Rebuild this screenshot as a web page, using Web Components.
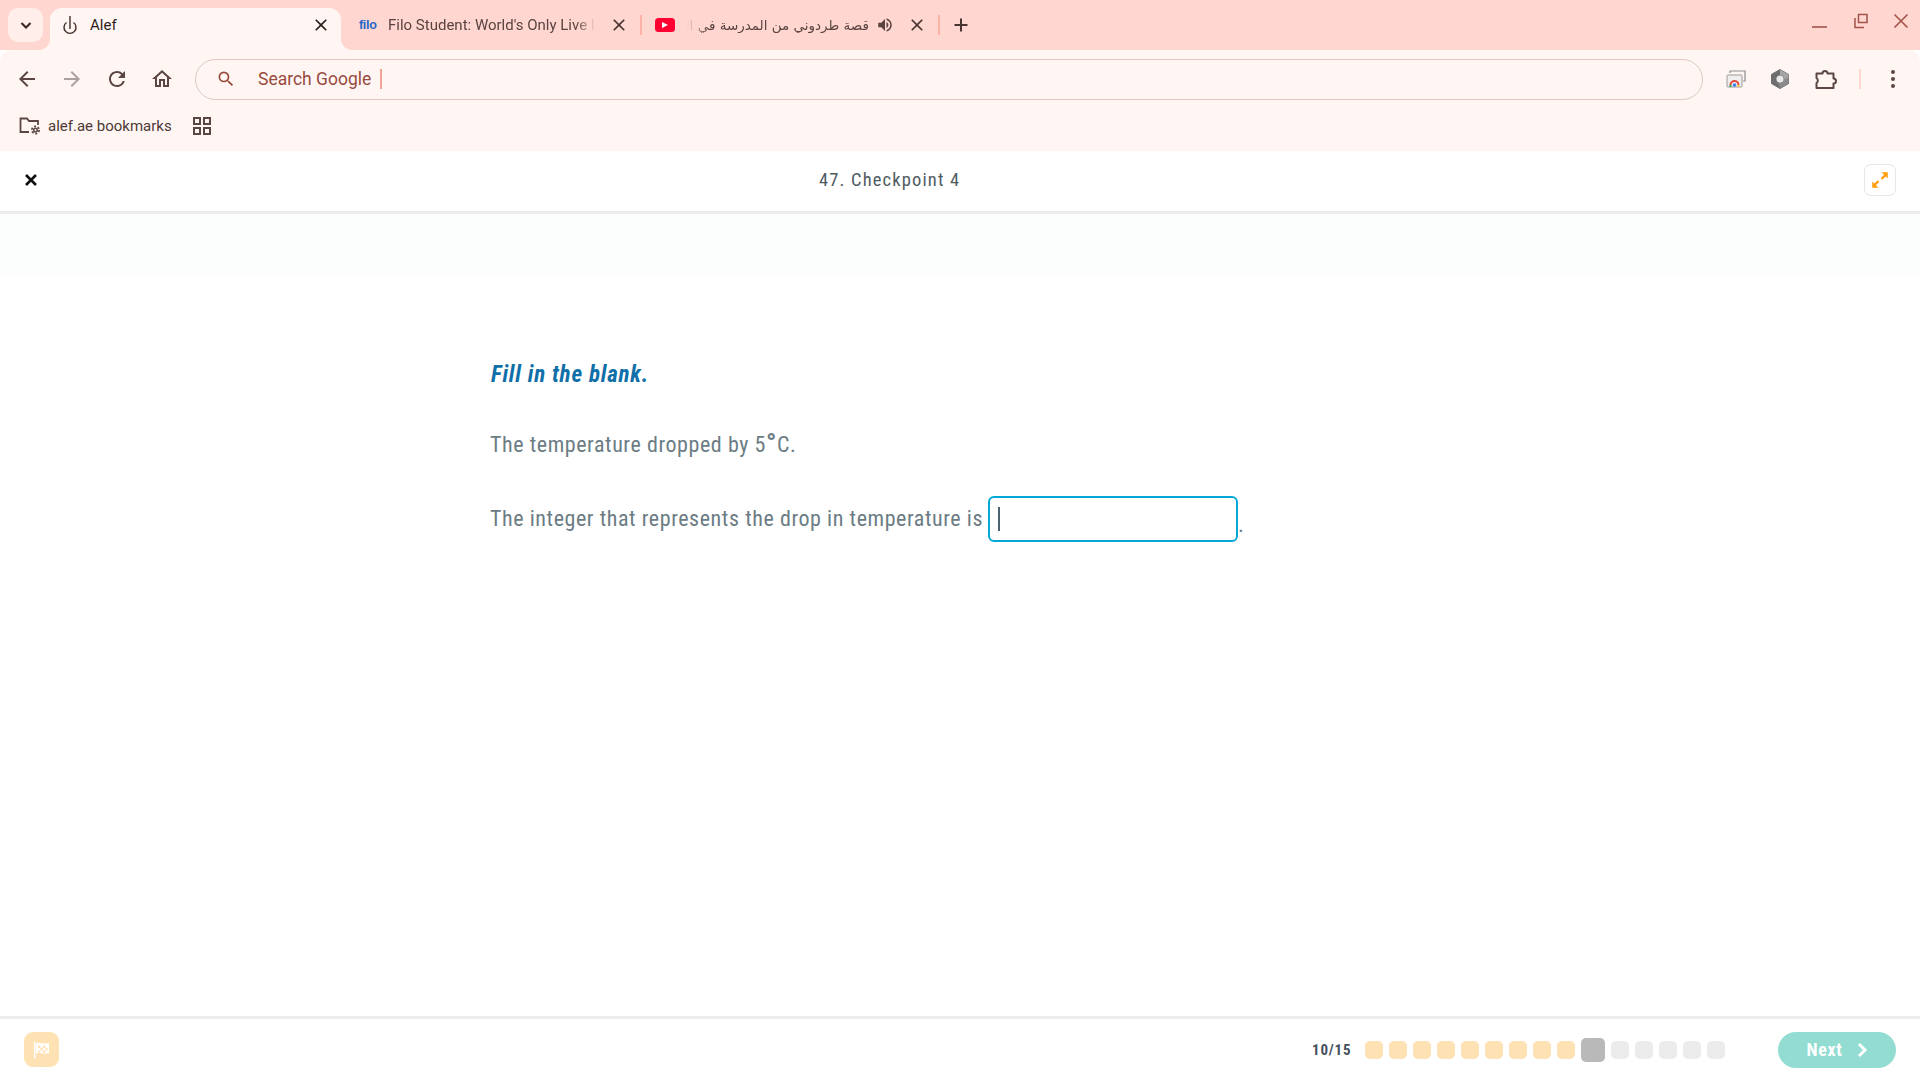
<!DOCTYPE html>
<html lang="en"><head><meta charset="utf-8"><title>Alef</title>
<style>
html,body{margin:0;height:100%;background:#fff;overflow:hidden}
body{display:flex;flex-direction:column;height:1080px;width:1920px;font-family:Roboto,"Noto Sans",sans-serif}
</style></head><body>
<browser-tabs></browser-tabs>
<browser-toolbar></browser-toolbar>
<browser-bookmarks></browser-bookmarks>
<lesson-header></lesson-header>
<lesson-question></lesson-question>
<lesson-footer></lesson-footer>
<script>
const P={
x:'M19 6.41L17.59 5 12 10.59 6.41 5 5 6.41 10.59 12 5 17.59 6.41 19 12 13.41 17.59 19 19 17.59 13.41 12z',
back:'M20 11H7.83l5.59-5.59L12 4l-8 8 8 8 1.41-1.41L7.83 13H20v-2z',
fwd:'M12 4l-1.41 1.41L16.17 11H4v2h12.17l-5.58 5.59L12 20l8-8z',
reload:'M17.65 6.35A7.958 7.958 0 0 0 12 4c-4.42 0-7.99 3.58-7.99 8s3.57 8 7.99 8c3.73 0 6.84-2.55 7.73-6h-2.08A5.99 5.99 0 0 1 12 18c-3.31 0-6-2.69-6-6s2.69-6 6-6c1.66 0 3.14.69 4.22 1.78L13 11h7V4l-2.35 2.35z',
home:'M12 5.69l5 4.5V18h-2v-6H9v6H7v-7.81l5-4.5M12 3L2 12h3v8h6v-6h2v6h6v-8h3L12 3z',
search:'M15.5 14h-.79l-.28-.27A6.471 6.471 0 0 0 16 9.5 6.5 6.5 0 1 0 9.5 16c1.61 0 3.09-.59 4.23-1.57l.27.28v.79l5 4.99L20.49 19l-4.99-5zm-6 0C7.01 14 5 11.99 5 9.5S7.01 5 9.5 5 14 7.01 14 9.5 11.99 14 9.5 14z',
vol:'M3 9v6h4l5 5V4L7 9H3zm13.5 3c0-1.77-1.02-3.29-2.5-4.03v8.05c1.48-.73 2.5-2.25 2.5-4.02zM14 3.23v2.06c2.89.86 5 3.54 5 6.71s-2.11 5.85-5 6.71v2.06c4.01-.91 7-4.49 7-8.77s-2.99-7.86-7-8.77z'
};
const ic=(n,s,c)=>`<svg width="${s}" height="${s}" viewBox="0 0 24 24" fill="${c}" style="display:block;flex:none"><path d="${P[n]}"/></svg>`;
const def=(name,html)=>customElements.define(name,class extends HTMLElement{constructor(){super();this.attachShadow({mode:'open'}).innerHTML=html}});

def('browser-tabs',`<style>
:host{display:flex;height:50px;background:#ffd7d0;flex:none;font:15px Roboto,sans-serif;color:#3f2b28;position:relative}
.chev{width:35px;height:34px;margin:8px 7px 0 8px;background:#ffeeea;border-radius:10px;display:flex;align-items:center;justify-content:center;flex:none}
.tab{display:flex;align-items:center;height:42px;margin-top:8px;padding-bottom:8px!important;flex:none;box-sizing:border-box;position:relative}
.active{width:291px;background:#fff6f4;border-radius:12px 12px 0 0;padding:0 10px 0 10px}
.active::before,.active::after{content:"";position:absolute;bottom:0;width:12px;height:12px}
.active::before{left:-12px;background:radial-gradient(circle at 0 0,transparent 12px,#fff6f4 12.5px)}
.active::after{right:-12px;background:radial-gradient(circle at 100% 0,transparent 12px,#fff6f4 12.5px)}
.fav{width:20px;height:20px;flex:none}
.t{flex:1;min-width:0;white-space:nowrap}
.a .t{padding-left:10px}
.second{width:299px;padding:0 11px 0 18px;color:#5a4340}
.filo{font:700 12.5px "Liberation Sans",sans-serif;color:#2767c9;letter-spacing:-.3px;width:29px;flex:none}
.fade{-webkit-mask-image:linear-gradient(90deg,#000 85%,transparent 94%);mask-image:linear-gradient(90deg,#000 85%,transparent 94%)}
.sep{width:2px;height:20px;background:#ffb3a7;margin-top:15px;flex:none}
.third{width:297px;padding:0 12px 0 13px;color:#5a4340}
.yt{width:20px;height:14px;background:#ff0033;border-radius:3.5px;display:flex;align-items:center;justify-content:center;flex:none;margin-right:12px}
.yt i{display:block;width:0;height:0;border-left:6px solid #fff;border-top:3.5px solid transparent;border-bottom:3.5px solid transparent}
.ar{font:13.5px "DejaVu Sans","Noto Sans",sans-serif;direction:rtl;text-align:right;-webkit-mask-image:linear-gradient(90deg,transparent 0,#000 12%);mask-image:linear-gradient(90deg,transparent 0,#000 12%)}
.plus{display:flex;align-items:center;margin:0 0 0 12px;height:50px}
.win{margin-left:auto;display:flex;align-items:flex-start;padding:13px 11px 0 0;gap:24px}
</style>
<div class="chev"><svg width="14" height="14" viewBox="0 0 14 14" fill="none" stroke="#3a2725" stroke-width="2.1"><path d="M2.5 5l4.5 4.5L11.500 5"/></svg></div>
<div class="tab active a">
 <svg class="fav" viewBox="0 0 20 20" fill="none" stroke="#3f2b28" stroke-width="1.4"><path d="M6.500 7.500a6 6 0 1 0 7 0"/><path d="M10 1v13"/></svg>
 <div class="t" style="color:#2c1c1a">Alef</div>${ic('x',20,'#2c1c1a')}
</div>
<div class="tab second"><span class="filo">filo</span><div class="t fade">Filo Student: World's Only Live I</div>${ic('x',20,'#4a3431')}</div>
<div class="sep"></div>
<div class="tab third"><span class="yt"><i></i></span><div class="t ar">قصة طردوني من المدرسة في ال</div><span style="margin:0 13px 0 7px">${ic('vol',18,'#5a4340')}</span>${ic('x',20,'#4a3431')}</div>
<div class="sep" style="margin-left:-1px"></div>
<div class="plus"><svg width="18" height="18" viewBox="0 0 18 18" stroke="#4a3431" stroke-width="2"><path d="M9 2.500v13M2.500 9h13"/></svg></div>
<div class="win">
 <svg width="18" height="18" viewBox="0 0 18 18" stroke="#a3534a" stroke-width="1.6"><path d="M1 14h15"/></svg>
 <svg width="16" height="16" viewBox="0 0 16 16" fill="none" stroke="#a3534a" stroke-width="1.5"><path d="M5.500 1.500h8.500v8h-8.500z"/><path d="M2 5v9.500h9"/></svg>
 <svg width="16" height="16" viewBox="0 0 16 16" stroke="#a3534a" stroke-width="1.6"><path d="M1.500 1.500l13 13M14.500 1.500l-13 13"/></svg>
</div>`);

def('browser-toolbar',`<style>
:host{display:flex;align-items:center;height:60px;background:#fff6f4;flex:none;border-radius:12px 12px 0 0;box-sizing:border-box;padding:0 16px 2px 15px}
.nav{width:24px;height:24px;flex:none;margin-right:21px}
.omni{box-sizing:border-box;width:1508px;height:41px;margin-left:0;border:1.5px solid #dcc7c4;border-radius:21px;display:flex;align-items:center;padding-left:20px;font:17.5px Roboto,sans-serif;color:#984a3d;flex:none}
.omni span{margin-left:22px}
.omni i{display:block;width:1.5px;height:20px;background:#f3a394;margin-left:9px}
.r{display:flex;align-items:center;flex:none}
</style>
<span class="nav">${ic('back',24,'#5b4643')}</span>
<span class="nav" style="margin-right:21px">${ic('fwd',24,'#ad9f9d')}</span>
<span class="nav">${ic('reload',24,'#5b4643')}</span>
<span class="nav">${ic('home',24,'#5b4643')}</span>
<div class="omni">${ic('search',20,'#984a3d')}<span>Search Google</span><i></i></div>
<div class="r" style="margin-left:23px">
 <svg width="20" height="20" viewBox="0 0 20 20" style="flex:none"><path d="M4 4V2h15v10h-2" fill="none" stroke="#8d8d8d" stroke-width="1.200"/><rect x="1" y="6" width="15" height="12" rx="1" fill="#f0efef" stroke="#9a9a9a"/><path d="M3.500 16a5 5 0 0 1 10 0h-2a3 3 0 0 0-6 0z" fill="#e24a3b"/><path d="M3.500 16h2v2h-2z" fill="#2ea94f"/><path d="M11.500 16h2v2h-2z" fill="#f7c233"/><circle cx="8.500" cy="16" r="1.800" fill="#3f80ee"/></svg>
 <svg width="22" height="22" viewBox="0 0 22 22" style="margin-left:23px;flex:none"><path d="M11 1.500l8.500 4.900v9.200L11 20.500l-8.500-4.900V6.400z" fill="#6e6e6e" stroke="#6e6e6e" stroke-linejoin="round"/><path d="M11 1.500l8.500 4.900v4L15 11a4 4 0 0 0-4-4z" fill="#a5a5a5"/><path d="M19.500 11v4.600L11 20.500l-2-6.500a4 4 0 0 0 6-3z" fill="#8b8b8b"/><circle cx="11" cy="11" r="3.600" fill="#e9e7e7"/></svg>
 <svg width="24" height="24" viewBox="0 0 24 24" fill="none" stroke="#5b4643" stroke-width="2" style="margin-left:22px;flex:none"><path d="M3.500 6.500h6a2.500 2.500 0 1 1 5 0h6v5a2.500 2.500 0 1 1 0 5V21h-17v-5a3 3 0 0 0 0-5z" stroke-linejoin="round"/></svg>
 <span style="display:block;width:2px;height:20px;background:#ffd7d0;margin-left:22px"></span>
 <svg width="6" height="20" viewBox="0 0 6 20" fill="#5b4643" style="margin-left:29px;flex:none"><circle cx="3" cy="3" r="2"/><circle cx="3" cy="10" r="2"/><circle cx="3" cy="17" r="2"/></svg>
</div>`);

def('browser-bookmarks',`<style>
:host{display:flex;align-items:center;height:41px;background:#fff6f4;flex:none;box-sizing:border-box;padding:0 0 10px 18px;font:15px Roboto,sans-serif;color:#4d3936}
svg{display:block;flex:none}
</style>
<svg width="24" height="22" viewBox="0 0 24 22" fill="none" stroke="#5b4643" stroke-width="1.800"><path d="M11 17H2.500V3.500h6.500l2 2.500h9v4"/><circle cx="17.500" cy="15" r="1.800" stroke-width="1.500"/><circle cx="17.500" cy="15" r="3.600" stroke-width="1.800" stroke-dasharray="2 1.770"/></svg>
<span style="margin-left:6px">alef.ae bookmarks</span>
<svg width="20" height="20" viewBox="0 0 20 20" fill="none" stroke="#5b4643" stroke-width="2" style="margin-left:20px"><rect x="2" y="2" width="6" height="6"/><rect x="12" y="2" width="6" height="6"/><rect x="2" y="12" width="6" height="6"/><rect x="12" y="12" width="6" height="6"/></svg>`);

def('lesson-header',`<style>
:host{display:flex;align-items:center;height:63px;box-sizing:border-box;flex:none;background:#fff;border-bottom:3px solid #ececec;padding:0 24px 3px 24px;font:18.5px Roboto,sans-serif;font-stretch:75%;color:#4f5b62}
.title{margin-left:781px;letter-spacing:1.15px;white-space:nowrap;padding-top:1px}
.ex{margin-left:auto;width:32px;height:32px;box-sizing:border-box;border:1.5px solid #e6e6e6;border-radius:7px;display:flex;align-items:center;justify-content:center}
</style>
<svg width="14" height="14" viewBox="0 0 14 14" stroke="#111" stroke-width="2.600" style="flex:none"><path d="M2 2l10 10M12 2L2 12"/></svg>
<div class="title">47. Checkpoint 4</div>
<div class="ex"><svg width="18" height="18" viewBox="0 0 18 18" fill="#ff9d0a" stroke="#ff9d0a"><path d="M11 1.500h5.500V7z" stroke-width=".5"/><path d="M14 4.500l-3.500 3.500" stroke-width="2.400"/><path d="M7 16.500H1.500V11z" stroke-width=".5"/><path d="M4 13.500l3.500-3.500" stroke-width="2.400"/></svg></div>`);

def('lesson-question',`<style>
:host{display:block;flex:1;min-height:0;background:linear-gradient(#fbfefc 0,#fbfefc 61px,#fff 61px);padding:147px 0 0 490px;font:22px Roboto,sans-serif;font-stretch:75%;color:#6b7c84;box-sizing:border-box}
.prompt{font-weight:700;font-style:italic;font-size:23px;letter-spacing:.8px;line-height:28px;color:#0f6fa8;margin-bottom:42px;padding-left:1px}
.line{line-height:28px;letter-spacing:.57px;white-space:nowrap}
.deg{font-size:27px;font-weight:700;line-height:0;vertical-align:-1px}
.l2{display:flex;align-items:center;height:46px;margin-top:37px}
.blank{box-sizing:border-box;width:250px;height:46px;border:2.500px solid #05a9d8;border-radius:6px;margin-left:5px;display:flex;align-items:center;padding-left:8px;flex:none}
.blank i{display:block;width:2px;height:24px;background:#4b6470}
</style>
<div class="prompt">Fill in the blank.</div>
<div class="line">The temperature dropped by 5<span class="deg">°</span>C.</div>
<div class="line l2"><span>The integer that represents the drop in temperature is</span><span class="blank"><i></i></span><span style="align-self:flex-end;line-height:34px">.</span></div>`);

const dots=Array.from({length:15},(_,i)=>`<i class="${i<9?'d':i==9?'c':'n'}"></i>`).join('');
def('lesson-footer',`<style>
:host{display:flex;align-items:center;height:64px;box-sizing:border-box;flex:none;border-top:3px solid #ececec;padding:0 24px;background:#fff;font:700 15px Roboto,sans-serif;font-stretch:75%;color:#45505f}
.flag{width:35px;height:35px;border-radius:9px;background:#ffe2b3;display:flex;align-items:center;justify-content:center;flex:none}
.count{margin-left:auto;width:53px;white-space:nowrap;letter-spacing:.8px}
.dots{display:flex;align-items:center;gap:6px}
i{display:block;flex:none}
.d,.n{width:18px;height:18px;border-radius:5px}
.d{background:#ffe2b3}.n{background:#ececec}
.c{width:24px;height:24px;border-radius:5px;background:#b9b9b9}
.next{margin-left:53px;width:118px;height:36px;border-radius:18px;background:#92dcd2;color:#fff;display:flex;align-items:center;justify-content:center;gap:13px;font-size:18px;letter-spacing:.7px}
</style>
<div class="flag"><svg width="20" height="20" viewBox="0 0 20 20"><path d="M2 1.500h1.500v17H2z" fill="#fff"/><path d="M4 3.500c4-1.500 8 1 13-.5v10c-5 1.500-9-1-13 .5z" fill="#fff"/><g fill="#ffe2b3"><rect x="6" y="5.500" width="2.500" height="2.500"/><rect x="11" y="5.500" width="2.500" height="2.500"/><rect x="8.500" y="8" width="2.500" height="2.500"/><rect x="13.500" y="8" width="2" height="2.500"/><rect x="6" y="10.500" width="2.500" height="2"/><rect x="11" y="10.500" width="2.500" height="2"/></g></svg></div>
<div class="count">10/15</div>
<div class="dots">${dots}</div>
<div class="next"><span>Next</span><svg width="12" height="16" viewBox="0 0 12 16" fill="none" stroke="#fff" stroke-width="3"><path d="M3 2l6 6-6 6"/></svg></div>`);
</script>
</body></html>
